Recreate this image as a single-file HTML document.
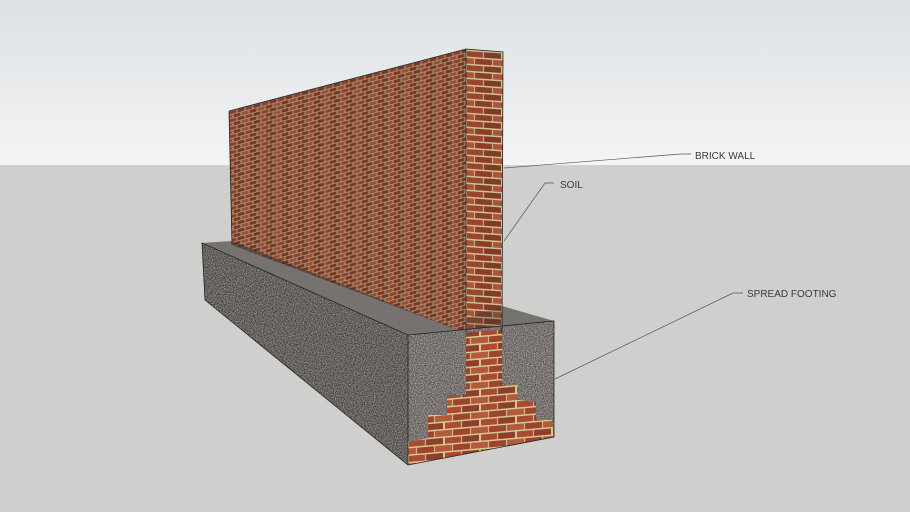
<!DOCTYPE html>
<html><head><meta charset="utf-8"><style>
html,body{margin:0;padding:0;width:910px;height:512px;overflow:hidden;background:#cfcfcd}
svg{display:block}
text{font-family:"Liberation Sans",sans-serif;font-size:10px;fill:#3a3a3a}
</style></head><body>
<svg width="910" height="512" viewBox="0 0 910 512" xmlns="http://www.w3.org/2000/svg">
<defs>
<linearGradient id="sky" x1="0" y1="0" x2="0" y2="1">
<stop offset="0" stop-color="#dde1e4"/><stop offset="1" stop-color="#f3f4f5"/>
</linearGradient>
<pattern id="brickF" width="16" height="8" patternUnits="userSpaceOnUse" patternTransform="translate(229,111) skewY(-14.7)">
<rect width="16" height="8" fill="#b09a74"/>
<rect x="0.5" y="0.5" width="7" height="3.2" fill="#8e3f2c"/>
<rect x="8.5" y="0.5" width="7" height="3.2" fill="#6f3a2c"/>
<rect x="-3.5" y="4.5" width="7" height="3.2" fill="#9a5038"/>
<rect x="4.5" y="4.5" width="7" height="3.2" fill="#7a3428"/>
<rect x="12.5" y="4.5" width="7" height="3.2" fill="#9a5038"/>
</pattern>
<pattern id="brickE" width="36" height="14" patternUnits="userSpaceOnUse" patternTransform="translate(466,50) skewY(4)">
<rect width="36" height="14" fill="#d2bf8c"/>
<rect x="1" y="1" width="16" height="5.5" fill="#9a452f"/>
<rect x="18" y="1" width="17" height="5.5" fill="#7e3a2c"/>
<rect x="-8" y="8" width="16" height="5.5" fill="#a8543a"/>
<rect x="9" y="8" width="17" height="5.5" fill="#8a3e2c"/>
<rect x="27" y="8" width="17" height="5.5" fill="#a8543a"/>
</pattern>
<pattern id="brickS" width="36" height="15" patternUnits="userSpaceOnUse" patternTransform="translate(408,335) skewY(-5)">
<rect width="36" height="15" fill="#d8c690"/>
<rect x="1" y="1" width="16" height="6" fill="#aa4a30"/>
<rect x="18" y="1" width="17" height="6" fill="#8e3f2b"/>
<rect x="-8" y="8.5" width="16" height="6" fill="#b25a3a"/>
<rect x="9" y="8.5" width="17" height="6" fill="#9c442d"/>
<rect x="27" y="8.5" width="17" height="6" fill="#b25a3a"/>
</pattern>
<filter id="soilD" x="0" y="0" width="1" height="1" color-interpolation-filters="sRGB">
<feTurbulence type="fractalNoise" baseFrequency="0.9" numOctaves="2" result="n"/>
<feColorMatrix in="n" type="matrix" values="0.7 0 0 0 0.06  0.7 0 0 0 0.04  0.7 0 0 0 0.03  0 0 0 0 1"/>
<feComposite in2="SourceGraphic" operator="in"/>
</filter>
<filter id="soilL" x="0" y="0" width="1" height="1" color-interpolation-filters="sRGB">
<feTurbulence type="fractalNoise" baseFrequency="0.9" numOctaves="2" result="n"/>
<feColorMatrix in="n" type="matrix" values="0.7 0 0 0 0.13  0.7 0 0 0 0.11  0.7 0 0 0 0.10  0 0 0 0 1"/>
<feComposite in2="SourceGraphic" operator="in"/>
</filter>
</defs>
<rect width="910" height="165" fill="url(#sky)"/>
<rect y="165" width="910" height="347" fill="#cfcfcd"/>

<polygon points="229,111 466,49 466,333 232,245" fill="url(#brickF)"/>
<polygon points="466,49 503,52 502,333 466,333" fill="url(#brickE)"/>

<polygon points="202,243 408,335 408,465 205,300" fill="#777" filter="url(#soilD)"/>
<polygon points="202,243 232,241 466,333 408,335" fill="#3a3432" opacity="0.6"/>
<polygon points="502,306 554,321 502,329" fill="#3a3432" opacity="0.6"/>
<polygon points="466,318 502,306 502,326 466,333" fill="#3a3432" opacity="0.3"/>
<polygon points="408,335 554,321 554,437 408,465" fill="#888" filter="url(#soilL)"/>
<polygon points="466,333 502,329 502,385 518,385 518,400 536,402 536,420 552,420 554,437 408,465 408,442 428,438 428,415 447,415 447,395 466,395" fill="url(#brickS)"/>
<g stroke="#222" stroke-width="0.8" fill="none">
<polyline points="229,111 466,49 503,52 502,333"/>
<line x1="466" y1="49" x2="466" y2="333"/>
<line x1="229" y1="111" x2="232" y2="245"/>
<polyline points="205,300 202,243 408,335 554,321 554,437 408,465 205,300"/>
<line x1="408" y1="335" x2="408" y2="465"/>
</g>

<g stroke="#555" stroke-width="0.7" fill="none">
<polyline points="504,168 681,154 691,154"/>
<polyline points="504,241 545,183 554,183"/>
<polyline points="555,379 733,293 743,293"/>
</g>
<text x="695" y="159">BRICK WALL</text>
<text x="560" y="188">SOIL</text>
<text x="747" y="297">SPREAD FOOTING</text>
</svg>
</body></html>
